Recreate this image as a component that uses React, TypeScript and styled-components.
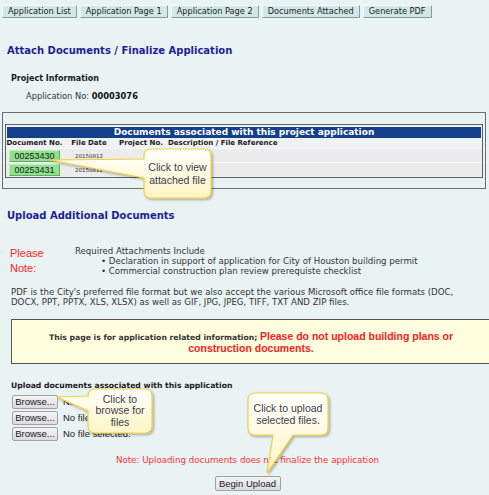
import React from 'react'
import styled, { createGlobalStyle } from 'styled-components'

const GlobalStyle = createGlobalStyle`
  html, body {
    margin: 0;
    padding: 0;
    background: #e9f3f4;
    overflow: hidden;
  }
  body {
    font-family: "DejaVu Sans", Verdana, sans-serif;
    color: #222;
  }
`

const Page = styled.div`
  position: relative;
  width: 489px;
  height: 495px;
  overflow: hidden;
`

const Toolbar = styled.nav`
  display: flex;
  gap: 3px;
  padding: 5px 0 0 2px;
`

const NavButton = styled.button`
  height: 13px;
  margin: 0;
  padding: 0 5px;
  font: 8.2px/11px "DejaVu Sans", Verdana, sans-serif;
  color: #1d1d1d;
  background: #d1e9e6;
  border: 1px solid;
  border-color: #f4fbfa #8d9c9b #8d9c9b #f4fbfa;
  white-space: nowrap;
`

const Title = styled.h2<{ $top: number }>`
  margin: ${(p) => p.$top}px 0 0 7px;
  font-size: 10px;
  line-height: 12px;
  font-weight: bold;
  color: #1e1e94;
`

const Label = styled.div<{ $top: number; $size: number }>`
  margin: ${(p) => p.$top}px 0 0 11px;
  font-size: ${(p) => p.$size}px;
  line-height: 10px;
  font-weight: bold;
  color: #1a1a1a;
`

const AppNo = styled.div`
  margin: 7px 0 0 26px;
  font-size: 8.3px;
  line-height: 10px;
  color: #333;

  b {
    color: #111;
  }
`

const DocBox = styled.section`
  margin: 11px 0 0 2px;
  width: 482px;
  border: 1px solid #6d6d6d;
  padding: 11px 0 10px;
`

const DocTable = styled.div`
  margin: 0 2px;
  border: 1px solid #5f5f5f;
  padding: 2px 0 1px;
  background: #eef2f2;
`

const TableHead = styled.div`
  margin: 0 1px;
  background: #143f8a;
  color: #fff;
  font-size: 9px;
  line-height: 11px;
  font-weight: bold;
  text-align: center;
`

const Columns = styled.div`
  display: grid;
  grid-template-columns: 57px 52px 52px 1fr;
  align-items: center;
`

const ColumnRow = styled(Columns)`
  height: 10px;
  font-size: 7px;
  font-weight: bold;
  color: #1a1a1a;

  span {
    text-align: center;
    white-space: nowrap;
  }
  span:last-child {
    text-align: left;
    padding-left: 1px;
  }
`

const DataRow = styled(Columns)`
  height: 14px;
  background: #ececec;
  border-top: 1px solid #f7f7f7;
  box-sizing: border-box;
`

const DocNumber = styled.button`
  justify-self: center;
  width: 51px;
  height: 12px;
  padding: 0;
  font: 9px/10px "Liberation Sans", Arial, sans-serif;
  color: #1b1b1b;
  background: #8fe08f;
  border: 1px solid;
  border-color: #b8f0b8 #5fae5f #5fae5f #b8f0b8;
`

const FileDate = styled.span`
  text-align: center;
  font-size: 5.5px;
  color: #333;
`

const NoteSection = styled.div`
  display: flex;
  margin-top: 24px;
  padding-left: 10px;
`

const NoteLabel = styled.div`
  width: 65px;
  font: 11px/15px "Liberation Sans", Arial, sans-serif;
  color: #ff2424;
`

const NoteBody = styled.div`
  font-size: 8.6px;
  line-height: 10px;
  color: #333;
`

const BulletList = styled.ul`
  margin: 0;
  padding-left: 26px;
  list-style: none;

  li::before {
    content: '• ';
  }
`

const Paragraph = styled.p`
  margin: 11px 0 0 11px;
  font-size: 8.6px;
  line-height: 10px;
  color: #333;

  span {
    display: block;
    white-space: nowrap;
  }
`

const WarningBox = styled.div`
  margin: 12px 0 0 11px;
  width: 438px;
  padding: 10px 20px 9px;
  border: 1px solid #555;
  background: #ffffe0;
  text-align: center;
  font: bold 10.5px/12px "Liberation Sans", Arial, sans-serif;
`

const WarningLead = styled.span`
  font-family: "DejaVu Sans", Verdana, sans-serif;
  font-size: 7.7px;
  line-height: 0;
  color: #333;
`

const WarningStrong = styled.strong`
  color: #ff1a1a;
`

const FileRows = styled.div`
  display: flex;
  flex-direction: column;
  gap: 2px;
  margin-top: 4px;
  padding-left: 12px;
`

const FileRow = styled.div`
  display: flex;
  align-items: center;
  gap: 5px;
`

const GrayButton = styled.button<{ $w: number; $h: number }>`
  width: ${(p) => p.$w}px;
  height: ${(p) => p.$h}px;
  margin: 0;
  padding: 0;
  font: 9.5px/12px "Liberation Sans", Arial, sans-serif;
  color: #1a1a1a;
  background: linear-gradient(#f4f4f4, #dcdcdc);
  border: 1px solid #a2a2a2;
  border-radius: 2px;
`

const FileName = styled.span`
  font: 9.5px/12px "Liberation Sans", Arial, sans-serif;
  color: #1a1a1a;
`

const Footer = styled.div`
  display: flex;
  flex-direction: column;
  align-items: center;
  gap: 11px;
  margin-top: 14px;
  padding-left: 6px;
`

const FooterNote = styled.div`
  font-size: 8.7px;
  line-height: 10px;
  color: #ff3030;
`

const Overlay = styled.svg`
  position: absolute;
  left: 0;
  top: 0;
  pointer-events: none;
`

const CalloutText = styled.div<{ $x: number; $y: number; $w: number; $h: number; $lh: number }>`
  position: absolute;
  left: ${(p) => p.$x}px;
  top: ${(p) => p.$y}px;
  width: ${(p) => p.$w}px;
  height: ${(p) => p.$h}px;
  display: flex;
  align-items: center;
  justify-content: center;
  text-align: center;
  font: 10.5px/${(p) => p.$lh}px "Liberation Sans", Arial, sans-serif;
  color: #3b3b4b;
`

type Tail = { side: 'left' | 'bottom'; a: number; b: number; tx: number; ty: number }

interface Callout {
  x: number
  y: number
  w: number
  h: number
  lh: number
  tail: Tail
  lines: string[]
}

const callouts: Callout[] = [
  {
    x: 144, y: 149, w: 67, h: 49, lh: 13,
    tail: { side: 'left', a: 159, b: 178, tx: 50, ty: 160 },
    lines: ['Click to view', 'attached file'],
  },
  {
    x: 88, y: 389, w: 64, h: 44, lh: 11.5,
    tail: { side: 'left', a: 396, b: 411, tx: 57, ty: 397 },
    lines: ['Click to', 'browse for', 'files'],
  },
  {
    x: 248, y: 393, w: 80, h: 42, lh: 12,
    tail: { side: 'bottom', a: 273, b: 293, tx: 267, ty: 473 },
    lines: ['Click to upload', 'selected files.'],
  },
]

const bubblePath = ({ x, y, w, h, tail }: Callout) => {
  const r = 7
  let d = `M${x + r} ${y} H${x + w - r} Q${x + w} ${y} ${x + w} ${y + r} V${y + h - r} Q${x + w} ${y + h} ${x + w - r} ${y + h}`
  if (tail.side === 'bottom') d += ` H${tail.b} L${tail.tx} ${tail.ty} L${tail.a} ${y + h}`
  d += ` H${x + r} Q${x} ${y + h} ${x} ${y + h - r}`
  if (tail.side === 'left') d += ` V${tail.b} L${tail.tx} ${tail.ty} L${x} ${tail.a}`
  d += ` V${y + r} Q${x} ${y} ${x + r} ${y} Z`
  return d
}

const navItems = ['Application List', 'Application Page 1', 'Application Page 2', 'Documents Attached', 'Generate PDF']

const documents = ['00253430', '00253431']

const App: React.FC = () => (
  <Page>
    <GlobalStyle />
    <Toolbar>
      {navItems.map((item) => (
        <NavButton key={item}>{item}</NavButton>
      ))}
    </Toolbar>

    <Title $top={27}>Attach Documents / Finalize Application</Title>
    <Label $top={17} $size={8}>Project Information</Label>
    <AppNo>
      Application No: <b>00003076</b>
    </AppNo>

    <DocBox>
      <DocTable>
        <TableHead>Documents associated with this project application</TableHead>
        <ColumnRow>
          <span>Document No.</span>
          <span>File Date</span>
          <span>Project No.</span>
          <span>Description / File Reference</span>
        </ColumnRow>
        {documents.map((doc) => (
          <DataRow key={doc}>
            <DocNumber>{doc}</DocNumber>
            <FileDate>20150812</FileDate>
            <span />
            <span />
          </DataRow>
        ))}
      </DocTable>
    </DocBox>

    <Title as="h3" $top={21}>Upload Additional Documents</Title>

    <NoteSection>
      <NoteLabel>
        Please
        <br />
        Note:
      </NoteLabel>
      <NoteBody>
        Required Attachments Include
        <BulletList>
          <li>Declaration in support of application for City of Houston building permit</li>
          <li>Commercial construction plan review prerequiste checklist</li>
        </BulletList>
      </NoteBody>
    </NoteSection>

    <Paragraph>
      <span>PDF is the City's preferred file format but we also accept the various Microsoft office file formats (DOC,</span>
      <span>DOCX, PPT, PPTX, XLS, XLSX) as well as GIF, JPG, JPEG, TIFF, TXT AND ZIP files.</span>
    </Paragraph>

    <WarningBox>
      <WarningLead>This page is for application related information; </WarningLead>
      <WarningStrong>
        Please do not upload building plans or
        <br />
        construction documents.
      </WarningStrong>
    </WarningBox>

    <Label $top={17} $size={7.7}>Upload documents associated with this application</Label>
    <FileRows>
      {[0, 1, 2].map((i) => (
        <FileRow key={i}>
          <GrayButton $w={46} $h={14}>Browse...</GrayButton>
          <FileName>No file selected.</FileName>
        </FileRow>
      ))}
    </FileRows>

    <Footer>
      <FooterNote>Note: Uploading documents does not finalize the application</FooterNote>
      <GrayButton $w={66} $h={15}>Begin Upload</GrayButton>
    </Footer>

    <Overlay width={489} height={495} viewBox="0 0 489 495">
      <defs>
        <linearGradient id="calloutFill" x1="0" y1="0" x2="0" y2="1">
          <stop offset="0" stopColor="#fffffd" />
          <stop offset="1" stopColor="#fff5c4" />
        </linearGradient>
        <filter id="calloutShadow" x="-20%" y="-20%" width="140%" height="140%">
          <feDropShadow dx="1.5" dy="1.5" stdDeviation="1.2" floodColor="#000" floodOpacity="0.3" />
        </filter>
      </defs>
      {callouts.map((c, i) => (
        <path
          key={i}
          d={bubblePath(c)}
          fill="url(#calloutFill)"
          stroke="#f0cf3c"
          strokeWidth={1.2}
          filter="url(#calloutShadow)"
        />
      ))}
    </Overlay>
    {callouts.map((c, i) => (
      <CalloutText key={i} $x={c.x} $y={c.y} $w={c.w} $h={c.h} $lh={c.lh}>
        <div>
          {c.lines.map((line) => (
            <div key={line}>{line}</div>
          ))}
        </div>
      </CalloutText>
    ))}
  </Page>
)

export default App
